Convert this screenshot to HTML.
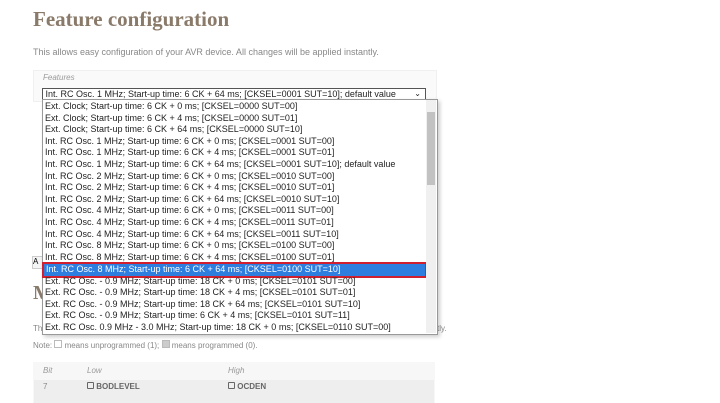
<!DOCTYPE html>
<html><head><style>
body{margin:0;width:720px;height:403px;background:#fff;overflow:hidden;position:relative;font-family:"Liberation Sans",sans-serif}
.abs{position:absolute}
h1{position:absolute;left:33px;top:7px;margin:0;font-family:"Liberation Serif",serif;font-weight:bold;font-size:21px;color:#8a7a6a}
.desc{left:33px;top:47px;font-size:9px;color:#888}
.box{left:33px;top:70px;width:402px;height:30px;background:#fafafa;border:1px solid #f0f0f0}
.sel{left:42px;top:88px;width:382px;height:10px;border:1px solid #555;background:#fff;font-size:9px;line-height:10px;color:#222;white-space:nowrap;overflow:hidden}
.list{left:42px;top:99px;width:394px;height:234px;border:1px solid #999;background:#fff;box-shadow:2px 2px 4px rgba(0,0,0,.2)}
.row{position:absolute;left:2px;height:11.6px;font-size:9px;line-height:11.6px;color:#222;white-space:nowrap}
.hl{background:#2e7ee0;color:#fff;outline:2px solid #d02030;left:1px;width:379px;padding-left:2px}
.sb{left:426px;top:100px;width:10px;height:233px;background:#f0f0f0}
.th{left:427px;top:112px;width:8px;height:73px;background:#c2c2c2}
</style></head><body>
<h1>Feature configuration</h1>
<div class="abs desc">This allows easy configuration of your AVR device. All changes will be applied instantly.</div>
<div class="abs box"><div class="abs" style="left:9px;top:2px;font-size:8px;font-style:italic;color:#999">Features</div></div>
<div class="abs sel">&nbsp;Int. RC Osc. 1 MHz; Start-up time: 6 CK + 64 ms; [CKSEL=0001 SUT=10]; default value<span class="abs" style="right:4px;top:0;font-size:8px">&#8964;</span></div>
<div class="abs" style="left:32px;top:256px;width:10px;height:11px;border:1px solid #ccc;background:#f4f4f4;font-size:8px">A</div>
<div class="abs" style="left:33px;top:282px;font-family:'Liberation Serif',serif;font-weight:bold;font-size:20px;color:#8a7a6a">M</div>
<div class="abs" style="left:33px;top:324px;font-size:8px;color:#888">Th</div>
<div class="abs" style="left:437px;top:324px;font-size:8px;color:#888">tly.</div>
<div class="abs" style="left:33px;top:340px;font-size:8px;color:#888">Note: <span style="display:inline-block;width:6px;height:6px;border:1px solid #bbb"></span> means unprogrammed (1); <span style="display:inline-block;width:6px;height:6px;border:1px solid #bbb;background:#ccc"></span> means programmed (0).</div>
<div class="abs" style="left:33px;top:362px;width:402px;height:41px;background:#f7f7f7"></div>
<div class="abs" style="left:34px;top:380px;width:400px;height:23px;background:#eeeeee"></div>
<div class="abs" style="left:43px;top:366px;font-size:8px;font-style:italic;color:#999">Bit</div>
<div class="abs" style="left:87px;top:366px;font-size:8px;font-style:italic;color:#999">Low</div>
<div class="abs" style="left:228px;top:366px;font-size:8px;font-style:italic;color:#999">High</div>
<div class="abs" style="left:43px;top:382px;font-size:8px;color:#888">7</div>
<div class="abs" style="left:87px;top:382px;font-size:8px;font-weight:bold;color:#666"><span style="display:inline-block;width:5px;height:5px;border:1px solid #666;border-radius:1px"></span> BODLEVEL</div>
<div class="abs" style="left:228px;top:382px;font-size:8px;font-weight:bold;color:#666"><span style="display:inline-block;width:5px;height:5px;border:1px solid #666;border-radius:1px"></span> OCDEN</div>
<div class="abs list">
<div class="row" style="top:1px">Ext. Clock; Start-up time: 6 CK + 0 ms; [CKSEL=0000 SUT=00]</div>
<div class="row" style="top:12.6px">Ext. Clock; Start-up time: 6 CK + 4 ms; [CKSEL=0000 SUT=01]</div>
<div class="row" style="top:24.2px">Ext. Clock; Start-up time: 6 CK + 64 ms; [CKSEL=0000 SUT=10]</div>
<div class="row" style="top:35.8px">Int. RC Osc. 1 MHz; Start-up time: 6 CK + 0 ms; [CKSEL=0001 SUT=00]</div>
<div class="row" style="top:47.4px">Int. RC Osc. 1 MHz; Start-up time: 6 CK + 4 ms; [CKSEL=0001 SUT=01]</div>
<div class="row" style="top:59px">Int. RC Osc. 1 MHz; Start-up time: 6 CK + 64 ms; [CKSEL=0001 SUT=10]; default value</div>
<div class="row" style="top:70.6px">Int. RC Osc. 2 MHz; Start-up time: 6 CK + 0 ms; [CKSEL=0010 SUT=00]</div>
<div class="row" style="top:82.2px">Int. RC Osc. 2 MHz; Start-up time: 6 CK + 4 ms; [CKSEL=0010 SUT=01]</div>
<div class="row" style="top:93.8px">Int. RC Osc. 2 MHz; Start-up time: 6 CK + 64 ms; [CKSEL=0010 SUT=10]</div>
<div class="row" style="top:105.4px">Int. RC Osc. 4 MHz; Start-up time: 6 CK + 0 ms; [CKSEL=0011 SUT=00]</div>
<div class="row" style="top:117px">Int. RC Osc. 4 MHz; Start-up time: 6 CK + 4 ms; [CKSEL=0011 SUT=01]</div>
<div class="row" style="top:128.6px">Int. RC Osc. 4 MHz; Start-up time: 6 CK + 64 ms; [CKSEL=0011 SUT=10]</div>
<div class="row" style="top:140.2px">Int. RC Osc. 8 MHz; Start-up time: 6 CK + 0 ms; [CKSEL=0100 SUT=00]</div>
<div class="row" style="top:151.8px">Int. RC Osc. 8 MHz; Start-up time: 6 CK + 4 ms; [CKSEL=0100 SUT=01]</div>
<div class="row hl" style="top:164px">Int. RC Osc. 8 MHz; Start-up time: 6 CK + 64 ms; [CKSEL=0100 SUT=10]</div>
<div class="row" style="top:175.6px">Ext. RC Osc. - 0.9 MHz; Start-up time: 18 CK + 0 ms; [CKSEL=0101 SUT=00]</div>
<div class="row" style="top:187.2px">Ext. RC Osc. - 0.9 MHz; Start-up time: 18 CK + 4 ms; [CKSEL=0101 SUT=01]</div>
<div class="row" style="top:198.8px">Ext. RC Osc. - 0.9 MHz; Start-up time: 18 CK + 64 ms; [CKSEL=0101 SUT=10]</div>
<div class="row" style="top:210.4px">Ext. RC Osc. - 0.9 MHz; Start-up time: 6 CK + 4 ms; [CKSEL=0101 SUT=11]</div>
<div class="row" style="top:222px">Ext. RC Osc. 0.9 MHz - 3.0 MHz; Start-up time: 18 CK + 0 ms; [CKSEL=0110 SUT=00]</div>
</div>
<div class="abs sb"></div>
<div class="abs th"></div>
</body></html>
